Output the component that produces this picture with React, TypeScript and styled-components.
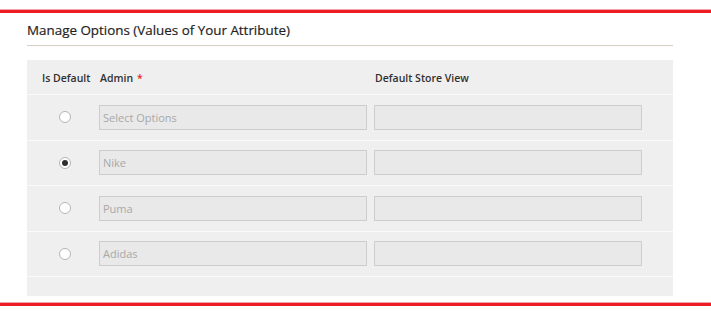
import React from "react";
import styled, { createGlobalStyle } from "styled-components";

const GlobalStyle = createGlobalStyle`
  html, body {
    margin: 0;
    padding: 0;
    background: #ffffff;
    font-family: "Open Sans", "Liberation Sans", sans-serif;
  }
  * {
    box-sizing: border-box;
  }
`;

const Page = styled.div`
  width: 711px;
  height: 324px;
  padding-top: 9px;
  background: #ffffff;
`;

const RedBar = styled.div`
  height: 4px;
  border-top: 1px solid #f2a3a6;
  background: #ed1c24;
`;

const Section = styled.div`
  width: 646px;
  margin-left: 27px;
  margin-bottom: 6px;
`;

const Title = styled.div`
  padding-top: 7px;
  padding-bottom: 5px;
  line-height: 20px;
  font-size: 13.4px;
  color: #1f1f1f;
  -webkit-text-stroke: 0.2px #1f1f1f;
  border-bottom: 1px solid #d5cfc3;
`;

const Panel = styled.div`
  margin-top: 14px;
  background: #efefef;
`;

type RowProps = { header?: boolean };

const Row = styled.div`
  display: grid;
  grid-template-columns: 72px 275px 268px;
  align-items: center;
  height: ${(props: RowProps) => (props.header ? "34px" : "45.5px")};
  padding-top: ${(props: RowProps) => (props.header ? "2px" : "0")};
  border-top: ${(props: RowProps) =>
    props.header ? "none" : "1px solid #fafafa"};
`;

const FooterRow = styled.div`
  height: 20px;
  border-top: 1px solid #fafafa;
`;

const HeadCell = styled.div`
  padding-left: ${(props: { indent?: number }) => props.indent ?? 1}px;
  font-size: 10.5px;
  font-weight: 600;
  color: #303030;
  white-space: nowrap;
`;

const Required = styled.span`
  color: #e22626;
  margin-left: 4px;
`;

const RadioCell = styled.div`
  display: flex;
  padding-left: 32px;
`;

const Radio = styled.span`
  position: relative;
  width: 12px;
  height: 12px;
  border-radius: 50%;
  border: 1px solid #b5b5b5;
  background: #ffffff;

  &::after {
    content: "";
    display: ${(props: { checked?: boolean }) => (props.checked ? "block" : "none")};
    position: absolute;
    left: 2px;
    top: 2px;
    width: 6px;
    height: 6px;
    border-radius: 50%;
    background: #303030;
  }
`;

const Field = styled.div`
  width: 268px;
  height: 25px;
  display: flex;
  align-items: center;
  padding-left: 3px;
  border: 1px solid #cdcdcd;
  background: #e9e9e9;
  font-size: 11px;
  color: #a8a8a8;
`;

const options = [
  { label: "Select Options", checked: false },
  { label: "Nike", checked: true },
  { label: "Puma", checked: false },
  { label: "Adidas", checked: false },
];

const App = () => (
  <Page>
    <GlobalStyle />
    <RedBar />
    <Section>
      <Title>Manage Options (Values of Your Attribute)</Title>
      <Panel>
        <Row header>
          <HeadCell indent={15}>Is Default</HeadCell>
          <HeadCell>
            Admin<Required>*</Required>
          </HeadCell>
          <HeadCell>Default Store View</HeadCell>
        </Row>
        {options.map((option) => (
          <Row key={option.label}>
            <RadioCell>
              <Radio checked={option.checked} />
            </RadioCell>
            <Field>{option.label}</Field>
            <Field />
          </Row>
        ))}
        <FooterRow />
      </Panel>
    </Section>
    <RedBar />
  </Page>
);

export default App;
